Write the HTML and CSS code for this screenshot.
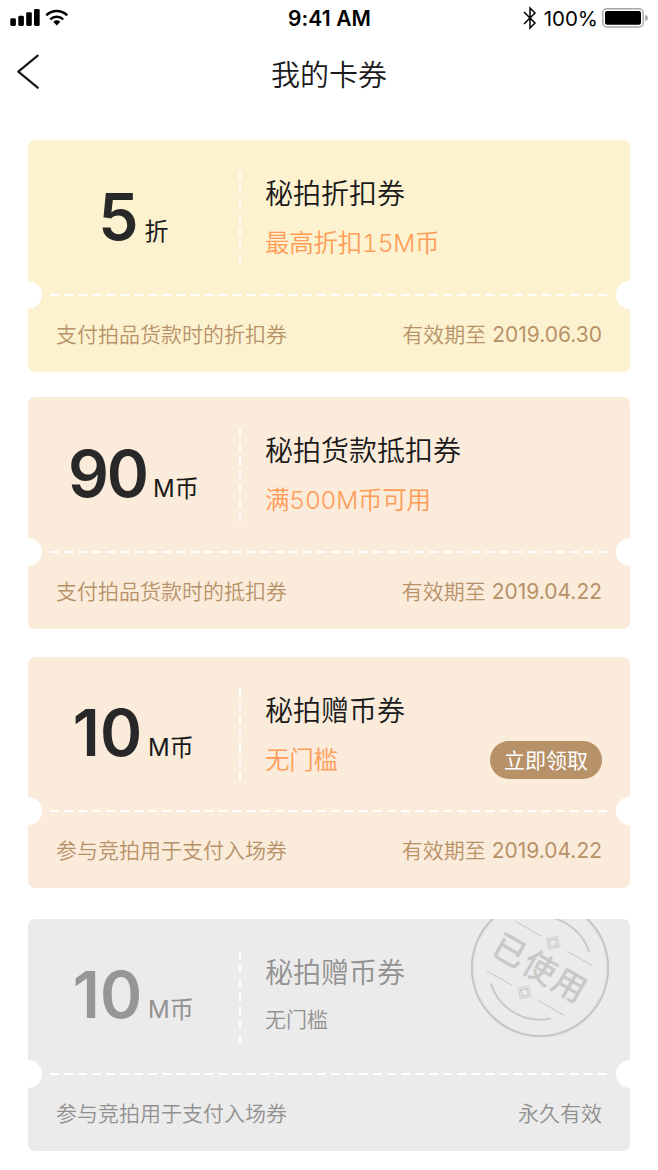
FILE: index.html
```html
<!DOCTYPE html>
<html lang="zh-CN">
<head>
<meta charset="utf-8">
<title>我的卡券</title>
<link rel="stylesheet" href="styles.css">
</head>
<body>
<header class="status">
  <div class="status-left">
    <svg width="60" height="20" viewBox="0 0 60 20">
      <rect x="0.3" y="9.3" width="5.6" height="7.7" rx="1.4"/>
      <rect x="8.3" y="6.8" width="5.6" height="10.2" rx="1.4"/>
      <rect x="16.2" y="3.2" width="5.6" height="13.8" rx="1.4"/>
      <rect x="24" y="0" width="5.7" height="17" rx="1.4"/>
      <g fill="none" stroke="#000" stroke-width="2.5">
        <path d="M36.3 6.3C42.2 .6 51.2 .6 57.2 6.3"/>
        <path d="M40.3 10.3C44 6.9 49.5 6.9 53.2 10.3"/>
      </g>
      <path d="M43.3 12.7Q46.8 9.9 50.3 12.7L46.8 16.4Z"/>
    </svg>
  </div>
  <div class="status-time">9:41 AM</div>
  <div class="status-right">
    <svg class="bluetooth" width="14" height="24" viewBox="0 0 14 24"><path d="M1 6L12 17L7 22V2L12 7L1 18" fill="none" stroke="#000" stroke-width="1.5"/></svg>
    <span class="percent">100%</span>
    <svg class="battery" width="47" height="20" viewBox="0 0 47 20">
      <rect x="0.8" y="0.8" width="40.4" height="18.2" rx="4" fill="none" stroke="#a6a6a6" stroke-width="1.4"/>
      <rect x="3" y="3" width="36" height="13.8" rx="2"/>
      <path d="M43.2 6.7Q46 7.6 46 10T43.2 13.3Z" fill="#a6a6a6"/>
    </svg>
  </div>
</header>
<nav class="nav">
  <svg class="back" width="24" height="36" viewBox="0 0 24 36"><path d="M21.7 1.7L2.3 17.7L21.7 33.7" fill="none" stroke="#1a1a1a" stroke-width="2.3" stroke-linecap="round" stroke-linejoin="round"/></svg>
  <h1 class="nav-title">我的卡券</h1>
</nav>
<main class="coupons">
  <section class="coupon coupon-yellow">
    <div class="coupon-main">
      <div class="value"><span class="number">5</span><span class="unit">折</span></div>
      <svg class="divider" width="2" height="94"><path d="M1 .4V94"/></svg>
      <div class="info"><h2 class="name">秘拍折扣券</h2><p class="rule">最高折扣15M币</p></div>
    </div>
    <svg class="tear" width="558" height="2"><path d="M0 1H557"/></svg>
    <footer class="coupon-foot"><span>支付拍品货款时的折扣券</span><span>有效期至 <span class="date">2019.06.30</span></span></footer>
  </section>
  <section class="coupon coupon-peach gap-small">
    <div class="coupon-main">
      <div class="value"><span class="number number-tight">90</span><span class="unit">M币</span></div>
      <svg class="divider" width="2" height="94"><path d="M1 .4V94"/></svg>
      <div class="info"><h2 class="name">秘拍货款抵扣券</h2><p class="rule">满500M币可用</p></div>
    </div>
    <svg class="tear" width="558" height="2"><path d="M0 1H557"/></svg>
    <footer class="coupon-foot"><span>支付拍品货款时的抵扣券</span><span>有效期至 <span class="date">2019.04.22</span></span></footer>
  </section>
  <section class="coupon coupon-peach gap-medium">
    <div class="coupon-main">
      <div class="value"><span class="number">10</span><span class="unit">M币</span></div>
      <svg class="divider" width="2" height="94"><path d="M1 .4V94"/></svg>
      <div class="info"><h2 class="name">秘拍赠币券</h2><p class="rule">无门槛</p></div>
      <button class="claim">立即领取</button>
    </div>
    <svg class="tear" width="558" height="2"><path d="M0 1H557"/></svg>
    <footer class="coupon-foot"><span>参与竞拍用于支付入场券</span><span>有效期至 <span class="date">2019.04.22</span></span></footer>
  </section>
  <section class="coupon coupon-used gap-large">
    <div class="coupon-main">
      <div class="value"><span class="number">10</span><span class="unit">M币</span></div>
      <svg class="divider" width="2" height="94"><path d="M1 .4V94"/></svg>
      <div class="info"><h2 class="name">秘拍赠币券</h2><p class="rule">无门槛</p></div>
    </div>
    <svg class="tear" width="558" height="2"><path d="M0 1H557"/></svg>
    <footer class="coupon-foot"><span>参与竞拍用于支付入场券</span><span>永久有效</span></footer>
    <svg class="stamp" width="140" height="140" viewBox="-70 -70 140 140">
      <g fill="none" stroke="#c8c8c8">
        <circle r="68" stroke-width="2.3"/>
        <path d="M-49.3 15.4A51.6 51.6 0 0 0 10.8 50.4M49.3 -15.8A51.6 51.6 0 0 0 -10.8 -50.4" stroke-width="1.9"/>
        <path d="M-45 -28.2H-15.5M15 -28.2H44.7M-45 29H-15.5M15 29H44.7" stroke-width="1" transform="rotate(30)"/>
        <g transform="translate(13 -25.2) rotate(-11)"><rect x="-5.4" y="-5.4" width="10.8" height="10.8" stroke-width=".8"/><rect x="-3.3" y="-3.3" width="6.6" height="6.6" stroke-width="1.3"/></g>
        <g transform="translate(-15.4 24.3) rotate(-11)"><rect x="-5.4" y="-5.4" width="10.8" height="10.8" stroke-width=".8"/><rect x="-3.3" y="-3.3" width="6.6" height="6.6" stroke-width="1.3"/></g>
      </g>
      <g class="stamp-text" transform="rotate(30)"><text x="-35" y="12">已</text><text x="-.3" y="12">使</text><text x="34" y="12">用</text></g>
    </svg>
  </section>
</main>
</body>
</html>
```
FILE: styles.css
```css
* { box-sizing: border-box; }
body {
  margin: 0;
  background: #fff;
  color: #1a1a1a;
  font-family: Inter, "Noto Sans CJK SC", sans-serif;
}
h1, h2, p { margin: 0; font-weight: 350; }
svg { display: block; flex: none; }
.status {
  display: grid;
  grid-template-columns: 1fr auto 1fr;
  align-items: start;
  height: 36px;
  padding: 0 9px 0 10px;
  color: #000;
}
.status-left { padding-top: 9px; }
.status-time { padding-top: 7px; font-size: 21px; line-height: 24px; font-weight: 600; letter-spacing: .1px; }
.status-right { display: flex; justify-content: flex-end; }
.bluetooth { margin-top: 6px; }
.percent { margin: 7px 4px 0 7px; font-size: 20.5px; line-height: 24px; }
.battery { margin-top: 8px; }
.nav {
  display: grid;
  grid-template-columns: 1fr auto 1fr;
  height: 104px;
  padding: 17px 16px 0;
}
.back { margin-top: 1px; }
.nav-title { padding-top: 3px; font-size: 29px; line-height: 40px; }
.coupons { display: flex; flex-direction: column; padding: 0 28px; }
.coupon {
  position: relative;
  display: flex;
  flex-direction: column;
  height: 231.6px;
  border-radius: 7px;
  overflow: hidden;
}
.gap-small { margin-top: 25.7px; }
.gap-medium { margin-top: 28px; }
.gap-large { margin-top: 30.5px; }
.coupon-yellow { background: #fdf2d0; }
.coupon-peach { background: #fbebdb; }
.coupon-used { background: #ebebeb; }
.coupon::before, .coupon::after {
  content: "";
  position: absolute;
  top: 140.6px;
  width: 28px;
  height: 28px;
  border-radius: 50%;
  background: #fff;
}
.coupon::before { left: -14px; }
.coupon::after { right: -14px; }
.coupon-main { display: flex; height: 153.6px; padding-right: 28px; }
.value {
  display: flex;
  justify-content: center;
  align-items: baseline;
  gap: 6px;
  width: 210.6px;
  padding-top: 38.5px;
}
.number { color: #282828; font-size: 64px; line-height: 76px; font-weight: 600; }
.number-tight { letter-spacing: -2px; }
.unit { font-size: 24px; line-height: 30px; }
.divider { margin-top: 30.6px; }
.divider path, .tear path { stroke: #fff; stroke-width: 1.8; stroke-dasharray: 8.8 5.25; }
.tear { margin-left: 22px; }
.info { flex: 1; padding: 34px 0 0 24.5px; }
.name { font-size: 28px; line-height: 40px; }
.rule {
  margin-top: 11px;
  font-size: 24.5px;
  line-height: 36px;
  letter-spacing: -.25px;
  font-variant-numeric: tabular-nums;
  color: #ff9c56;
  white-space: nowrap;
}
.claim {
  width: 112px;
  height: 38.6px;
  margin-top: 84px;
  padding: 2px 0 0;
  border: 0;
  border-radius: 20px;
  background: #b79268;
  color: #fff;
  font: 400 21px/36px Inter, "Noto Sans CJK SC", sans-serif;
}
.coupon-foot {
  display: flex;
  justify-content: space-between;
  padding: 23px 28px 0;
  color: #b79268;
  font-size: 21px;
  line-height: 32px;
  font-weight: 350;
}
.date { font-weight: 400; }
.coupon-used .number { color: #969696; }
.coupon-used .unit, .coupon-used .name, .coupon-used .rule, .coupon-used .coupon-foot { color: #919191; }
.coupon-used .rule { margin-top: 9px; font-size: 21px; letter-spacing: 0; }
.stamp { position: absolute; left: 441.6px; top: -21.3px; }
.stamp-text { fill: #c8c8c8; font-size: 33px; font-weight: 500; text-anchor: middle; }
```
